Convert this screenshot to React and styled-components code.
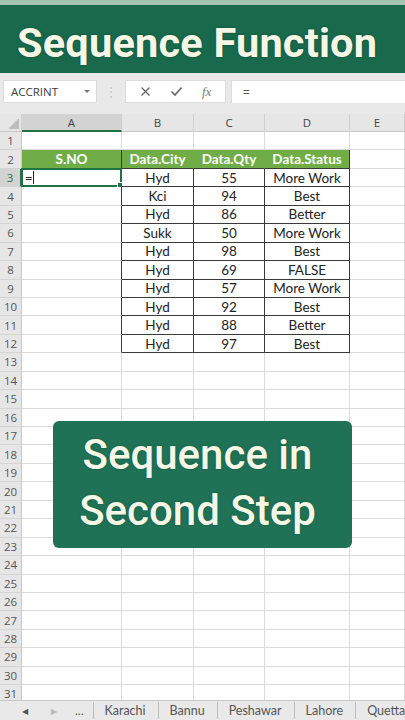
import React from "react";
import styled, { createGlobalStyle } from "styled-components";

const Global = createGlobalStyle`
  html, body { margin: 0; padding: 0; background: #ffffff; }
  body { width: 405px; height: 720px; overflow: hidden; font-family: "Lato", "Open Sans", sans-serif; }
  #root { width: 405px; height: 720px; }
`;

const Page = styled.div`
  width: 405px;
  height: 720px;
  display: flex;
  flex-direction: column;
  overflow: hidden;
  background: #ffffff;
`;

const TopStrip = styled.div`
  height: 5px;
  background: #a3c2b1;
  flex: none;
`;

const Banner = styled.div`
  height: 68px;
  flex: none;
  background: #19694d;
  display: flex;
  align-items: center;
  padding-left: 17px;
  box-sizing: border-box;
`;

const BannerTitle = styled.h1`
  margin: 0;
  font-family: "Roboto", "Noto Sans", sans-serif;
  font-weight: 700;
  font-size: 41.5px;
  letter-spacing: 0.2px;
  color: #f4f6e6;
  text-shadow: 0 0 2px rgba(0, 40, 20, 0.6);
  padding-top: 7px;
`;

const FormulaArea = styled.div`
  height: 41px;
  flex: none;
  background: #e9e9e9;
  display: flex;
  align-items: flex-start;
  padding: 7px 0 0 3px;
  box-sizing: border-box;
`;

const NameBox = styled.div`
  width: 94px;
  height: 23px;
  background: #ffffff;
  border: 1px solid #dcdcdc;
  box-sizing: border-box;
  display: flex;
  align-items: center;
  justify-content: space-between;
  padding: 0 6px 0 7px;
  font-family: "Open Sans", "Noto Sans", sans-serif;
  font-size: 11.5px;
  color: #3c3c3c;
`;

const Caret = styled.span`
  width: 0;
  height: 0;
  border-left: 3px solid transparent;
  border-right: 3px solid transparent;
  border-top: 3px solid #777;
`;

const Grip = styled.div`
  width: 28px;
  height: 23px;
  display: flex;
  align-items: center;
  justify-content: center;
  color: #c4c4c4;
  font-size: 12px;
`;

const ToolBox = styled.div`
  width: 101px;
  height: 23px;
  background: #ffffff;
  border: 1px solid #dcdcdc;
  box-sizing: border-box;
  display: flex;
  align-items: center;
  justify-content: space-around;
  padding: 0 4px;
`;

const Fx = styled.span`
  font-family: "Liberation Serif", "DejaVu Serif", serif;
  font-style: italic;
  font-size: 13px;
  color: #777;
`;

const FormulaInput = styled.div`
  flex: 1;
  height: 23px;
  margin-left: 5px;
  background: #ffffff;
  border-top: 1px solid #dcdcdc;
  border-left: 1px solid #dcdcdc;
  box-sizing: border-box;
  display: flex;
  align-items: center;
  padding-left: 11px;
  font-family: "Open Sans", sans-serif;
  font-size: 12px;
  color: #555;
`;

const SheetWrap = styled.div`
  position: relative;
  flex: 1;
  overflow: hidden;
`;

const Grid = styled.div`
  display: grid;
  grid-template-columns: 22px 100px 72px 71px 85px 55px;
  grid-template-rows: 18px;
  grid-auto-rows: 18.45px;
`;

const ColHead = styled.div`
  background: ${(p) => (p.$active ? "#d3d3d3" : "#e6e6e6")};
  border-right: 1px solid #cfcfcf;
  border-bottom: ${(p) => (p.$active ? "2px solid #217346" : "1px solid #c9c9c9")};
  box-sizing: border-box;
  display: flex;
  align-items: center;
  justify-content: center;
  font-family: "Open Sans", sans-serif;
  font-size: 11.5px;
  color: #444;
`;

const Corner = styled.div`
  background: #e6e6e6;
  border-right: 1px solid #cfcfcf;
  border-bottom: 1px solid #c9c9c9;
  box-sizing: border-box;
  position: relative;
  &::after {
    content: "";
    position: absolute;
    right: 2px;
    bottom: 2px;
    width: 0;
    height: 0;
    border-left: 11px solid transparent;
    border-bottom: 11px solid #bdbdbd;
  }
`;

const RowHead = styled.div`
  background: ${(p) => (p.$active ? "#d3d3d3" : "#e6e6e6")};
  border-right: ${(p) => (p.$active ? "2px solid #217346" : "1px solid #c9c9c9")};
  border-bottom: 1px solid #d4d4d4;
  box-sizing: border-box;
  display: flex;
  align-items: center;
  justify-content: center;
  font-family: "Open Sans", sans-serif;
  font-size: 11.5px;
  color: ${(p) => (p.$active ? "#217346" : "#555")};
`;

const Cell = styled.div`
  position: relative;
  background: ${(p) => p.$fill || "#ffffff"};
  border-right: 1px solid ${(p) => p.$br || "#dadada"};
  border-bottom: 1px solid ${(p) => p.$bb || "#dadada"};
  box-sizing: border-box;
  display: flex;
  align-items: center;
  justify-content: ${(p) => (p.$left ? "flex-start" : "center")};
  padding-left: ${(p) => (p.$left ? "3px" : "0")};
  font-family: "Lato", "Open Sans", sans-serif;
  font-size: 13.5px;
  font-weight: ${(p) => (p.$bold ? 700 : 400)};
  color: ${(p) => (p.$bold ? "#ffffff" : "#222")};
  white-space: nowrap;
`;

const Selection = styled.div`
  position: absolute;
  left: -1px;
  top: -1px;
  right: -1px;
  bottom: -1px;
  border: 2px solid #217346;
  pointer-events: none;
  &::after {
    content: "";
    position: absolute;
    right: -4px;
    bottom: -4px;
    width: 5px;
    height: 5px;
    background: #217346;
    border: 1px solid #ffffff;
  }
`;

const EditText = styled.span`
  display: flex;
  align-items: center;
  font-size: 13px;
  color: #222;
  &::after {
    content: "";
    width: 1px;
    height: 13px;
    background: #222;
  }
`;

const Overlay = styled.div`
  position: absolute;
  left: 53px;
  top: 307px;
  width: 299px;
  height: 127px;
  background: #1f7256;
  border-radius: 6px;
  display: flex;
  flex-direction: column;
  align-items: center;
  justify-content: center;
  font-family: "Roboto", "Noto Sans", sans-serif;
  font-weight: 500;
  font-size: 42px;
  line-height: 56px;
  color: #f4f6e6;
  text-shadow: 0 0 2px rgba(0, 40, 20, 0.5);
  padding: 0 10px 3px 0;
  box-sizing: border-box;
`;

const TabBar = styled.div`
  height: 20px;
  flex: none;
  background: #e9e9e9;
  border-top: 1px solid #c8c8c8;
  box-sizing: border-box;
  display: flex;
  align-items: center;
  font-family: "Lato", "Open Sans", sans-serif;
  font-size: 12.5px;
  color: #555;
`;

const Nav = styled.span`
  margin-left: ${(p) => p.$ml}px;
  margin-right: ${(p) => p.$mr || 0}px;
  color: ${(p) => p.$c || "#555"};
  font-size: ${(p) => p.$fs || 12}px;
  line-height: 1;
`;

const Tab = styled.span`
  padding: 0 12px 0 11px;
  border-left: 1px solid #bdbdbd;
  height: 17px;
  display: flex;
  align-items: center;
  white-space: nowrap;
`;

const cols = ["A", "B", "C", "D", "E"];
const data = [
  ["Hyd", "55", "More Work"],
  ["Kci", "94", "Best"],
  ["Hyd", "86", "Better"],
  ["Sukk", "50", "More Work"],
  ["Hyd", "98", "Best"],
  ["Hyd", "69", "FALSE"],
  ["Hyd", "57", "More Work"],
  ["Hyd", "92", "Best"],
  ["Hyd", "88", "Better"],
  ["Hyd", "97", "Best"],
];
const heads = ["S.NO", "Data.City", "Data.Qty", "Data.Status"];
const DARK = "#3a3a3a";
const GREEN = "#70ad47";

function XIcon() {
  return (
    <svg width="11" height="11" viewBox="0 0 11 11">
      <path d="M1.5 1.5 L9.5 9.5 M9.5 1.5 L1.5 9.5" stroke="#666" strokeWidth="1.3" fill="none" />
    </svg>
  );
}
function CheckIcon() {
  return (
    <svg width="13" height="11" viewBox="0 0 13 11">
      <path d="M1.5 5.5 L5 9 L11.5 1.5" stroke="#666" strokeWidth="1.6" fill="none" />
    </svg>
  );
}

function renderRow(r) {
  const cells = [];
  cells.push(
    <RowHead key={`h${r}`} $active={r === 3}>
      {r}
    </RowHead>
  );
  for (let c = 0; c < 5; c++) {
    const key = `${r}-${c}`;
    if (r === 2 && c < 4) {
      cells.push(
        <Cell key={key} $fill={GREEN} $bold $br={c === 0 || c === 3 ? DARK : GREEN} $bb={c > 0 ? DARK : "#dadada"}>
          {heads[c]}
        </Cell>
      );
    } else if (r >= 3 && r <= 12 && c >= 1 && c <= 3) {
      cells.push(
        <Cell key={key} $br={DARK} $bb={DARK}>
          {data[r - 3][c - 1]}
        </Cell>
      );
    } else if (r >= 3 && r <= 12 && c === 0) {
      cells.push(
        <Cell key={key} $br={DARK} $left>
          {r === 3 && (
            <>
              <EditText>=</EditText>
              <Selection />
            </>
          )}
        </Cell>
      );
    } else {
      cells.push(<Cell key={key} />);
    }
  }
  return cells;
}

export default function App() {
  const rows = [];
  for (let r = 1; r <= 31; r++) rows.push(...renderRow(r));
  return (
    <>
      <Global />
      <Page>
        <TopStrip />
        <Banner>
          <BannerTitle>Sequence Function</BannerTitle>
        </Banner>
        <FormulaArea>
          <NameBox>
            ACCRINT
            <Caret />
          </NameBox>
          <Grip>⋮</Grip>
          <ToolBox>
            <XIcon />
            <CheckIcon />
            <Fx>fx</Fx>
          </ToolBox>
          <FormulaInput>=</FormulaInput>
        </FormulaArea>
        <SheetWrap>
          <Grid>
            <Corner />
            {cols.map((c) => (
              <ColHead key={c} $active={c === "A"}>
                {c}
              </ColHead>
            ))}
            {rows}
          </Grid>
          <Overlay>
            <span>Sequence in</span>
            <span>Second Step</span>
          </Overlay>
        </SheetWrap>
        <TabBar>
          <Nav $ml={22} $fs={8}>◀</Nav>
          <Nav $ml={23} $fs={8} $c="#bbb">▶</Nav>
          <Nav $ml={18} $mr={9}>...</Nav>
          <Tab>Karachi</Tab>
          <Tab>Bannu</Tab>
          <Tab>Peshawar</Tab>
          <Tab>Lahore</Tab>
          <Tab>Quetta</Tab>
        </TabBar>
      </Page>
    </>
  );
}
